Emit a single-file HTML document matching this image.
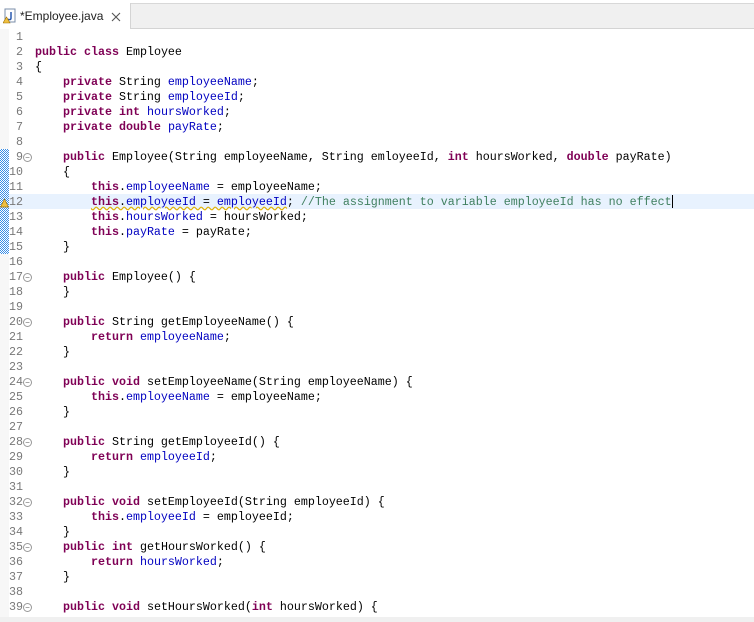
<!DOCTYPE html>
<html><head><meta charset="utf-8"><style>
*{margin:0;padding:0;box-sizing:border-box}
body{width:754px;height:622px;background:#fff;position:relative;overflow:hidden;font-family:"Liberation Mono",monospace}
.bar{position:absolute;left:0;top:3px;width:754px;height:26px;background:#f0f0f0;border-top:1px solid #d8d8d8;border-bottom:1px solid #d4d4d4}
.tab{position:absolute;left:0;top:3px;width:131px;height:26px;background:#fff;border-right:1px solid #d4d4d4;font-family:"Liberation Sans",sans-serif;font-size:12px;color:#222}
.tab .t{position:absolute;left:20px;top:6px}
.gut{position:absolute;left:0;top:29px;width:9px;height:588px;background:#f7f7f7}
.mark{position:absolute;left:0;top:149px;width:9px;height:105px;background:repeating-conic-gradient(#3a8ee6 0 25%,#fff 0 50%) 0 0/2px 2px}
.hl{position:absolute;left:0;top:194px;width:754px;height:15px;background:#e8f2fe}
.code{position:absolute;left:0;top:30px;font-size:11.67px;line-height:15px;white-space:pre;color:#000}
.ln{display:inline-block;width:23px;text-align:right;color:#787878;margin-right:12px}
.k{color:#7f0055;font-weight:bold}.f{color:#0000c0}.c{color:#3f7f5f}
.fold{position:absolute;left:23px;width:9px;height:9px;border:1px solid #999;border-radius:50%;font-size:8px;line-height:7px;text-align:center;color:#666;font-family:"Liberation Sans",sans-serif;background:#fff}
.bot{position:absolute;left:0;top:617px;width:754px;height:5px;background:#f0f0f0}
</style></head><body>
<div class="bar"></div>
<div class="tab"><svg style="position:absolute;left:3px;top:5px" width="14" height="16"><rect x="2" y="1" width="10" height="13" fill="#fff" stroke="#7a8ca8"/><path d="M8 4v6c0 2-2 2-3 1" stroke="#2a5ab0" stroke-width="1.5" fill="none"/><path d="M0 15L3.5 9L7 15z" fill="#f0c040" stroke="#a07000" stroke-width=".6"/></svg><span class="t">*Employee.java</span><svg style="position:absolute;left:111px;top:9px" width="10" height="10"><path d="M1 1L9 9M9 1L1 9" stroke="#555" stroke-width="1.1"/></svg></div>
<div class="gut"></div>
<div class="hl"></div>
<div class="mark"></div>
<div class="code"><span class="ln">1</span>
<span class="ln">2</span><span class="k">public</span> <span class="k">class</span> Employee
<span class="ln">3</span>{
<span class="ln">4</span>    <span class="k">private</span> String <span class="f">employeeName</span>;
<span class="ln">5</span>    <span class="k">private</span> String <span class="f">employeeId</span>;
<span class="ln">6</span>    <span class="k">private</span> <span class="k">int</span> <span class="f">hoursWorked</span>;
<span class="ln">7</span>    <span class="k">private</span> <span class="k">double</span> <span class="f">payRate</span>;
<span class="ln">8</span>
<span class="ln">9</span>    <span class="k">public</span> Employee(String employeeName, String emloyeeId, <span class="k">int</span> hoursWorked, <span class="k">double</span> payRate)
<span class="ln">10</span>    {
<span class="ln">11</span>        <span class="k">this</span>.<span class="f">employeeName</span> = employeeName;
<span class="ln">12</span>        <span class="k" style="text-decoration:underline wavy #e0b000">this</span><span style="text-decoration:underline wavy #e0b000">.<span class="f">employeeId</span> = <span class="f">employeeId</span></span>; <span class="c">//The assignment to variable employeeId has no effect</span>
<span class="ln">13</span>        <span class="k">this</span>.<span class="f">hoursWorked</span> = hoursWorked;
<span class="ln">14</span>        <span class="k">this</span>.<span class="f">payRate</span> = payRate;
<span class="ln">15</span>    }
<span class="ln">16</span>
<span class="ln">17</span>    <span class="k">public</span> Employee() {
<span class="ln">18</span>    }
<span class="ln">19</span>
<span class="ln">20</span>    <span class="k">public</span> String getEmployeeName() {
<span class="ln">21</span>        <span class="k">return</span> <span class="f">employeeName</span>;
<span class="ln">22</span>    }
<span class="ln">23</span>
<span class="ln">24</span>    <span class="k">public</span> <span class="k">void</span> setEmployeeName(String employeeName) {
<span class="ln">25</span>        <span class="k">this</span>.<span class="f">employeeName</span> = employeeName;
<span class="ln">26</span>    }
<span class="ln">27</span>
<span class="ln">28</span>    <span class="k">public</span> String getEmployeeId() {
<span class="ln">29</span>        <span class="k">return</span> <span class="f">employeeId</span>;
<span class="ln">30</span>    }
<span class="ln">31</span>
<span class="ln">32</span>    <span class="k">public</span> <span class="k">void</span> setEmployeeId(String employeeId) {
<span class="ln">33</span>        <span class="k">this</span>.<span class="f">employeeId</span> = employeeId;
<span class="ln">34</span>    }
<span class="ln">35</span>    <span class="k">public</span> <span class="k">int</span> getHoursWorked() {
<span class="ln">36</span>        <span class="k">return</span> <span class="f">hoursWorked</span>;
<span class="ln">37</span>    }
<span class="ln">38</span>
<span class="ln">39</span>    <span class="k">public</span> <span class="k">void</span> setHoursWorked(<span class="k">int</span> hoursWorked) {</div>
<div style="position:absolute;left:672px;top:195px;width:1px;height:13px;background:#000"></div>
<div class="fold" style="top:153px">−</div>
<div class="fold" style="top:273px">−</div>
<div class="fold" style="top:318px">−</div>
<div class="fold" style="top:378px">−</div>
<div class="fold" style="top:438px">−</div>
<div class="fold" style="top:498px">−</div>
<div class="fold" style="top:543px">−</div>
<div class="fold" style="top:603px">−</div>
<svg style="position:absolute;left:0;top:196px" width="10" height="12"><path d="M0.5 11L4.5 3L8.5 11z" fill="#f0c040" stroke="#a07000" stroke-width=".7"/></svg>
<div class="bot"></div>
</body></html>
